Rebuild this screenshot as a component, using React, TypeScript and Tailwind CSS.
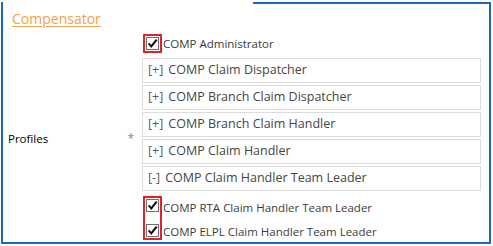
import React from 'react';

// --- Datos del formulario ---
type Profile = { name: string; open?: boolean };

const groups: Profile[] = [
  { name: 'COMP Claim Dispatcher' },
  { name: 'COMP Branch Claim Dispatcher' },
  { name: 'COMP Branch Claim Handler' },
  { name: 'COMP Claim Handler' },
  { name: 'COMP Claim Handler Team Leader', open: true },
];

const lastChecks = ['COMP RTA Claim Handler Team Leader', 'COMP ELPL Claim Handler Team Leader'];

const CheckBox = () => (
  <span className="flex h-[13px] w-[13px] shrink-0 items-center justify-center border border-[#707070] bg-white">
    <svg width="11" height="11" viewBox="0 0 11 11">
      <path d="M1.6 5.4 L4.3 8.4 L9.7 1.6" fill="none" stroke="#111" strokeWidth="2.1" />
    </svg>
  </span>
);

const GroupRow = ({ p }: { p: Profile }) => (
  <div className="flex h-[25px] items-center border border-[#dcdcdc] pl-[5px] text-[12.5px] text-[#454545]">
    <span className="mr-[5px] text-[#5a5a5a]">{p.open ? '[-]' : '[+]'}</span>
    {p.name}
  </div>
);

export default function App() {
  return (
    <div className="h-[246px] w-[493px] bg-white pt-[2px] pl-[1px]" style={{ fontFamily: '"Open Sans", sans-serif' }}>
      <div className="relative h-[242px] w-[490px] border-2 border-[#1a6bbf]">
        <div className="absolute -top-[2px] left-0 h-[2px] w-[250px] bg-white" />
        <div className="h-[26px] pl-[9px] pt-[2px]">
          <span className="text-[14px] leading-[20px] text-[#f7a046] underline decoration-1 underline-offset-[2px]">Compensator</span>
        </div>
        <div className="mt-[4px] flex">
          <div className="flex w-[139px] items-center justify-between pl-[5px] pr-[8px]">
            <span className="text-[11.5px] text-black">Profiles</span>
            <span className="text-[12px] text-[#888]">*</span>
          </div>
          <div className="flex w-[339px] flex-col">
            <div className="flex h-[19px] items-center">
              <div className="ml-[1px] border-2 border-[#d9262c] p-[1px]">
                <CheckBox />
              </div>
              <span className="ml-[1px] text-[11.5px] text-[#3c3c3c]">COMP Administrator</span>
            </div>
            <div className="mt-[5px] flex flex-col gap-[2px]">
              {groups.map((p) => (
                <GroupRow key={p.name} p={p} />
              ))}
            </div>
            <div className="mt-[5px] flex items-start">
              <div className="ml-[1px] flex flex-col gap-[12px] border-2 border-[#d9262c] p-[1px]">
                {lastChecks.map((n) => (
                  <CheckBox key={n} />
                ))}
              </div>
              <div className="ml-[1px] flex flex-col">
                {lastChecks.map((n) => (
                  <span key={n} className="flex h-[24px] items-center text-[11.5px] text-[#3c3c3c]">{n}</span>
                ))}
              </div>
            </div>
          </div>
        </div>
      </div>
    </div>
  );
}
